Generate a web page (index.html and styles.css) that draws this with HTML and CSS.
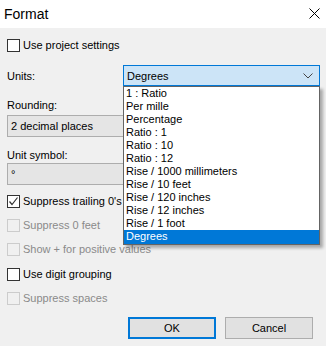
FILE: index.html
```html
<!DOCTYPE html>
<html>
<head>
<meta charset="utf-8">
<link rel="stylesheet" href="styles.css">
</head>
<body>
<div class="dialog">
  <div class="titlebar">
    <span class="title">Format</span>
    <svg class="close" width="11" height="11" viewBox="0 0 11 11"><path d="M0.5 0.5 L10.5 10.5 M10.5 0.5 L0.5 10.5" stroke="#000" stroke-width="1"/></svg>
  </div>
  <div class="content">
    <label class="check first"><span class="box"></span>Use project settings</label>
    <div class="units-row">
      <span class="lbl">Units:</span>
      <div class="combo-wrap">
        <div class="combo active">
          <span>Degrees</span>
          <svg class="arrow" width="10" height="6" viewBox="0 0 10 6"><path d="M0.5 0.5 L5 5 L9.5 0.5" fill="none" stroke="#444" stroke-width="1"/></svg>
        </div>
        <ul class="list">
          <li>1 : Ratio</li>
          <li>Per mille</li>
          <li>Percentage</li>
          <li>Ratio : 1</li>
          <li>Ratio : 10</li>
          <li>Ratio : 12</li>
          <li>Rise / 1000 millimeters</li>
          <li>Rise / 10 feet</li>
          <li>Rise / 120 inches</li>
          <li>Rise / 12 inches</li>
          <li>Rise / 1 foot</li>
          <li class="sel">Degrees</li>
        </ul>
      </div>
    </div>
    <div class="label l-round">Rounding:</div>
    <div class="combo gray g-round">2 decimal places</div>
    <div class="label l-unit">Unit symbol:</div>
    <div class="combo gray g-unit">°</div>
    <label class="check c-trail"><span class="box"><svg width="11" height="11" viewBox="0 0 11 11"><path d="M1.5 5.5 L4 8.5 L9.5 1.5" fill="none" stroke="#333" stroke-width="1.2"/></svg></span>Suppress trailing 0's</label>
    <label class="check disabled c-feet"><span class="box"></span>Suppress 0 feet</label>
    <label class="check disabled c-plus"><span class="box"></span>Show + for positive values</label>
    <label class="check c-digit"><span class="box"></span>Use digit grouping</label>
    <label class="check disabled c-space"><span class="box"></span>Suppress spaces</label>
    <div class="buttons">
      <button class="btn default">OK</button>
      <button class="btn">Cancel</button>
    </div>
  </div>
</div>
</body>
</html>
```
FILE: styles.css
```css
* { box-sizing: border-box; }
html, body { margin: 0; padding: 0; }
body {
  width: 326px;
  height: 346px;
  overflow: hidden;
  font-family: "Segoe UI", "Liberation Sans", Arial, sans-serif;
  font-size: 11px;
  color: #000;
  background: #f0f0f0;
}
.dialog { display: flex; flex-direction: column; height: 346px; }
.titlebar {
  height: 28px;
  background: #fff;
  display: flex;
  align-items: center;
  justify-content: space-between;
  padding: 0 6px 0 4px;
}
.title { font-size: 14px; margin-top: -1px; }
.close { margin-top: -2px; }
.content {
  flex: 1;
  background: #f0f0f0;
  padding: 0 7px;
  display: flex;
  flex-direction: column;
}
.check {
  display: flex;
  align-items: center;
  height: 13px;
  line-height: 13px;
  white-space: nowrap;
}
.check .box {
  width: 13px;
  height: 13px;
  border: 1px solid #333;
  background: #fff;
  margin-right: 3px;
  flex: none;
  display: flex;
  align-items: center;
  justify-content: center;
}
.check.disabled { color: #8a8a8a; }
.check.disabled .box { border-color: #cccccc; background: #f0f0f0; }
.first { margin-top: 11px; }
.units-row {
  display: flex;
  align-items: center;
  margin-top: 13px;
  height: 21px;
}
.lbl { flex: 1; }
.combo-wrap { position: relative; width: 197px; margin-right: -1px; }
.combo {
  height: 21px;
  display: flex;
  align-items: center;
  padding-left: 3px;
  border: 1px solid #adadad;
}
.combo.active {
  background: #cce4f7;
  border-color: #0078d7;
  justify-content: space-between;
  padding-right: 6px;
}
.combo.gray {
  background: #e5e5e5;
  border-color: #adadad;
  height: 22px;
}
.list {
  position: absolute;
  top: 21px;
  left: 0;
  width: 197px;
  margin: 0;
  padding: 0;
  list-style: none;
  background: #fff;
  border: 1px solid #646464;
  box-shadow: 3px 3px 3px rgba(0,0,0,0.3);
}
.list li {
  height: 13px;
  line-height: 13px;
  padding-left: 2px;
  white-space: nowrap;
}
.list li.sel { background: #0078d7; color: #fff; height: 14px; }
.label { height: 15px; line-height: 15px; }
.l-round { margin-top: 12px; }
.g-round { margin-top: 2px; }
.l-unit { margin-top: 11px; }
.c-trail { margin-top: 10px; }
.c-feet { margin-top: 11px; }
.c-plus { margin-top: 11px; }
.c-digit { margin-top: 12px; }
.c-space { margin-top: 11px; }
.buttons {
  display: flex;
  justify-content: flex-end;
  gap: 9px;
  margin-top: 12px;
  padding-right: 6px;
}
.btn {
  font-family: inherit;
  font-size: 11px;
  width: 88px;
  height: 22px;
  background: #e1e1e1;
  border: 1px solid #adadad;
  padding: 0;
  color: #000;
}
.btn.default { border: 2px solid #0078d7; }
```
